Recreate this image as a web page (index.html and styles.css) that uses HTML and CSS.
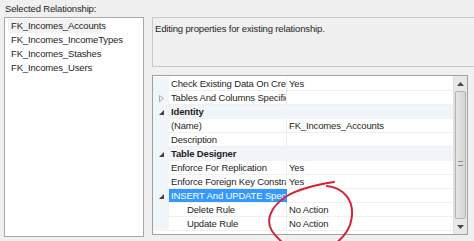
FILE: index.html
```html
<!DOCTYPE html>
<html lang="en">
<head>
    <meta charset="UTF-8">
    <meta name="viewport" content="width=device-width, initial-scale=1.0">
    <title>Foreign Key Relationships</title>
    <link rel="stylesheet" href="styles.css">
</head>
<body>
    <div class="dialog">
        <div class="left">
            <div class="caption">Selected Relationship:</div>
            <ul class="list">
                <li class="hover">FK_Incomes_Accounts</li>
                <li>FK_Incomes_IncomeTypes</li>
                <li>FK_Incomes_Stashes</li>
                <li>FK_Incomes_Users</li>
            </ul>
        </div>
        <div class="right">
            <div class="desc">Editing properties for existing relationship.</div>
            <div class="grid">
                <div class="rows">
                    <div class="row">
                        <span class="gut"></span><span class="name">Check Existing Data On Creation Or Re-Enabling</span><span class="val">Yes</span>
                    </div>
                    <div class="row">
                        <span class="gut"><svg class="tri" width="7" height="7" viewBox="0 0 7 7"><path d="M1.5 0.5 L5.5 3.5 L1.5 6.5 Z" fill="none" stroke="#a9a9a9"/></svg></span><span class="name">Tables And Columns Specification</span><span class="val"></span>
                    </div>
                    <div class="row cat">
                        <span class="gut"><svg class="tri" width="7" height="7" viewBox="0 0 7 7"><path d="M6 1 L6 6 L1 6 Z" fill="#404040"/></svg></span><span class="name">Identity</span>
                    </div>
                    <div class="row">
                        <span class="gut"></span><span class="name">(Name)</span><span class="val">FK_Incomes_Accounts</span>
                    </div>
                    <div class="row">
                        <span class="gut"></span><span class="name">Description</span><span class="val"></span>
                    </div>
                    <div class="row cat">
                        <span class="gut"><svg class="tri" width="7" height="7" viewBox="0 0 7 7"><path d="M6 1 L6 6 L1 6 Z" fill="#404040"/></svg></span><span class="name">Table Designer</span>
                    </div>
                    <div class="row">
                        <span class="gut"></span><span class="name">Enforce For Replication</span><span class="val">Yes</span>
                    </div>
                    <div class="row">
                        <span class="gut"></span><span class="name">Enforce Foreign Key Constraint</span><span class="val">Yes</span>
                    </div>
                    <div class="row">
                        <span class="gut"><svg class="tri" width="7" height="7" viewBox="0 0 7 7"><path d="M6 1 L6 6 L1 6 Z" fill="#404040"/></svg></span><span class="name selected">INSERT And UPDATE Specification</span><span class="val"></span>
                    </div>
                    <div class="row">
                        <span class="gut"></span><span class="name sub">Delete Rule</span><span class="val">No Action</span>
                    </div>
                    <div class="row">
                        <span class="gut"></span><span class="name sub">Update Rule</span><span class="val">No Action</span>
                    </div>
                </div>
                <div class="scrollbar">
                    <div class="sb-btn">
                        <svg width="7" height="4" viewBox="0 0 7 4"><path d="M0 4 L3.5 0 L7 4 Z" fill="#4a4a4a"/></svg>
                    </div>
                    <div class="sb-track">
                        <div class="sb-thumb"><span class="grip"></span></div>
                    </div>
                    <div class="sb-btn">
                        <svg width="7" height="4" viewBox="0 0 7 4"><path d="M0 0 L7 0 L3.5 4 Z" fill="#4a4a4a"/></svg>
                    </div>
                </div>
            </div>
        </div>
    </div>

    <svg class="scribble" width="474" height="241" viewBox="0 0 474 241">
        <path d="M334 182 C322 184 302 187 287 196 C271 206 265 220 272 231 C276 237 281 241 285 245" fill="none" stroke="#d3223a" stroke-width="2" stroke-linecap="round"/>
        <path d="M327 186 C344 188 353 200 352 215 C351 228 345 236 334 245" fill="none" stroke="#d3223a" stroke-width="2" stroke-linecap="round"/>
    </svg>
</body>
</html>
```

FILE: styles.css
```css
body {
    margin: 0;
    background: #f0f0f0;
    font-family: "Liberation Sans", Arial, sans-serif;
    font-size: 9.5px;
    letter-spacing: -0.15px;
    color: #1e1e1e;
    overflow: hidden;
    width: 474px;
    height: 241px;
    position: relative;
}
.dialog {
    display: flex;
    gap: 8px;
    padding: 0 0 0 4px;
}
.left {
    width: 140px;
    flex: none;
}
.caption {
    height: 17px;
    line-height: 17px;
    padding-left: 1px;
}
.list {
    margin: 0;
    padding: 1px 3px;
    list-style: none;
    height: 216px;
    background: #fff;
    border: 1px solid #a8a8a8;
}
.list li {
    height: 14px;
    line-height: 14px;
    padding-left: 3px;
    white-space: nowrap;
}
.list li.hover {
    background: #f2f2f2;
    width: 90px;
}
.right {
    flex: 1;
    padding-top: 17px;
    min-width: 0;
}
.desc {
    height: 50px;
    width: 340px;
    box-sizing: border-box;
    border: 1px solid #c8c8c8;
    border-right: none;
    padding: 4px 2px;
    line-height: 14px;
}
.grid {
    margin-top: 8px;
    width: 316px;
    height: 160px;
    box-sizing: border-box;
    border: 1px solid #a0a0a0;
    background: #fff;
    display: flex;
}
.rows {
    flex: 1;
    min-width: 0;
    padding-top: 1px;
}
.row {
    display: grid;
    grid-template-columns: 16px 118px 1fr;
    height: 14px;
    line-height: 14px;
    white-space: nowrap;
}
.row .gut {
    background: #f1f4f9;
    display: flex;
    align-items: center;
    justify-content: center;
}
.row .name {
    overflow: hidden;
    padding-left: 2px;
    border-bottom: 1px solid #f0f0f0;
    border-right: 1px solid #ececec;
}
.row .val {
    padding-left: 2px;
    border-bottom: 1px solid #f0f0f0;
    overflow: hidden;
}
.row.cat {
    background: #f1f4f9;
    grid-template-columns: 16px 1fr;
}
.row.cat .name {
    font-weight: bold;
    border: none;
}
.row .name.selected {
    background: #3399ff;
    color: #fff;
    border-right-color: #3399ff;
}
.row .name.sub {
    padding-left: 18px;
}
.tri {
    display: block;
}
.scrollbar {
    width: 13px;
    flex: none;
    display: flex;
    flex-direction: column;
    background: #e8e8e8;
    border-left: 1px solid #e2e2e2;
}
.sb-btn {
    height: 15px;
    flex: none;
    display: flex;
    align-items: center;
    justify-content: center;
}
.sb-track {
    flex: 1;
    padding: 0 1px;
    background: linear-gradient(to right, #dcdcdc, #eaeaea);
}
.sb-thumb {
    height: 128px;
    box-sizing: border-box;
    border: 1px solid #b5b5b5;
    border-radius: 2px;
    background: linear-gradient(to right, #e6e6e6, #d4d4d4);
    display: flex;
    align-items: flex-end;
    justify-content: center;
    padding-bottom: 52px;
}
.grip {
    width: 5px;
    height: 5px;
    border-top: 1px solid #8c8c8c;
    border-bottom: 1px solid #8c8c8c;
    box-sizing: border-box;
}
.scribble {
    position: absolute;
    left: 0;
    top: 0;
    pointer-events: none;
}
```
